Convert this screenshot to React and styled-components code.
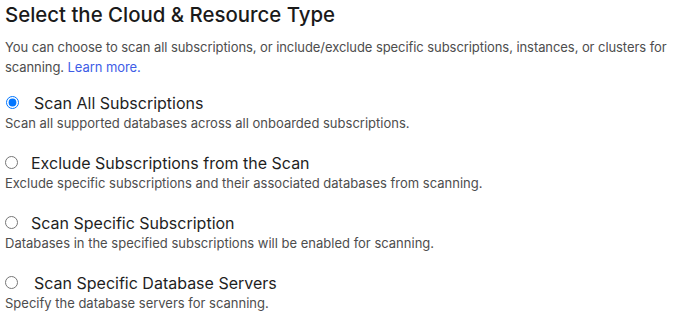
import React, { useState } from 'react'
import styled, { createGlobalStyle } from 'styled-components'

const Global = createGlobalStyle`
  body {
    margin: 0;
    background: #ffffff;
    font-family: Inter, "Noto Sans", sans-serif;
  }
`

const Page = styled.div`
  padding: 3px 0 0 5px;
`

const Title = styled.h2`
  margin: 0;
  font-size: 20.4px;
  line-height: 24px;
  font-weight: 500;
  color: #1a1a1a;
`

const Intro = styled.p`
  margin: 10px 0 0 0;
  font-size: 13px;
  line-height: 20px;
  letter-spacing: -0.07px;
  color: #4d4d4d;
`

const Link = styled.a`
  color: #3e5de6;
  text-decoration: none;
`

const Options = styled.div`
  display: flex;
  flex-direction: column;
  gap: 19px;
  margin-top: 15px;
`

const Option = styled.label`
  display: flex;
  flex-direction: column;
  cursor: pointer;
`

const Head = styled.div`
  display: flex;
  align-items: center;
  gap: ${p => p.$gap}px;
  height: 21px;
`

const Radio = styled.input`
  margin: 0 0 0 ${p => p.$offset}px;
  width: 13px;
  height: 13px;
`

const Name = styled.span`
  font-size: 16px;
  line-height: 20px;
  color: #1f1f1f;
`

const Hint = styled.span`
  font-size: 13px;
  line-height: 20px;
  color: #4d4d4d;
`

const items = [
  { id: 'all', name: 'Scan All Subscriptions', hint: 'Scan all supported databases across all onboarded subscriptions.', gap: 15, offset: 1 },
  { id: 'exclude', name: 'Exclude Subscriptions from the Scan', hint: 'Exclude specific subscriptions and their associated databases from scanning.', gap: 13, offset: 0 },
  { id: 'sub', name: 'Scan Specific Subscription', hint: 'Databases in the specified subscriptions will be enabled for scanning.', gap: 13, offset: 0 },
  { id: 'servers', name: 'Scan Specific Database Servers', hint: 'Specify the database servers for scanning.', gap: 16, offset: 0 },
]

export default function App() {
  const [value, setValue] = useState('all')
  return (
    <Page>
      <Global />
      <Title>Select the Cloud &amp; Resource Type</Title>
      <Intro>
        You can choose to scan all subscriptions, or include/exclude specific subscriptions, instances, or clusters for
        scanning. <Link href="#">Learn more.</Link>
      </Intro>
      <Options>
        {items.map(it => (
          <Option key={it.id}>
            <Head $gap={it.gap}>
              <Radio
                type="radio"
                name="scope"
                $offset={it.offset}
                checked={value === it.id}
                onChange={() => setValue(it.id)}
              />
              <Name>{it.name}</Name>
            </Head>
            <Hint>{it.hint}</Hint>
          </Option>
        ))}
      </Options>
    </Page>
  )
}
